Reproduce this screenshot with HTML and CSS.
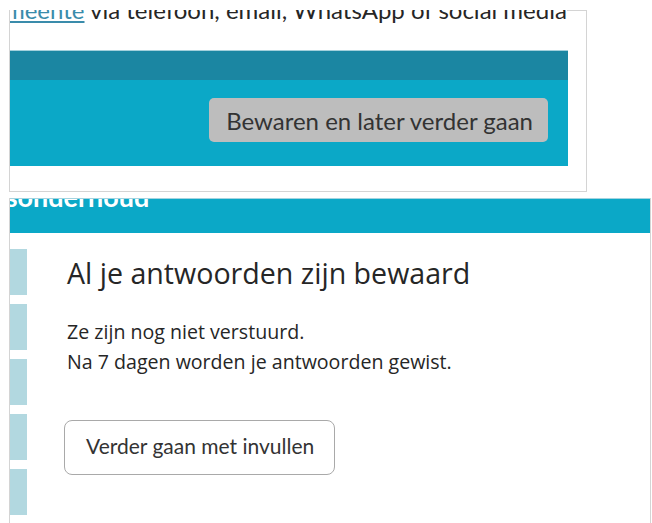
FILE: index.html
```html
<!DOCTYPE html>
<html lang="nl">
<head>
    <meta charset="UTF-8">
    <meta name="viewport" content="width=device-width, initial-scale=1.0">
    <title>Bewaren en later verder gaan</title>
    <link rel="stylesheet" href="styles.css">
</head>
<body>

<div class="save-panel">
    <div class="intro">
        <span class="intro-text"><a href="#">gemeente</a> via telefoon, email, WhatsApp of social media</span>
        <span class="intro-rule"></span>
    </div>
    <div class="save-bar">
        <div class="save-bar-top"></div>
        <div class="save-bar-body">
            <button class="btn-save">Bewaren en later verder gaan</button>
        </div>
    </div>
</div>

<div class="saved-panel">
    <div class="saved-head"><span class="saved-head-title">Huisonderhoud</span></div>
    <div class="saved-body">
        <div class="steps">
            <span></span><span></span><span></span><span></span><span></span><span></span><span></span>
        </div>
        <div class="saved-content">
            <h1>Al je antwoorden zijn bewaard</h1>
            <p>Ze zijn nog niet verstuurd.<br>Na 7 dagen worden je antwoorden gewist.</p>
            <button class="btn-continue">Verder gaan met invullen</button>
        </div>
    </div>
</div>

</body>
</html>
```

FILE: styles.css
```css
body {
    margin: 0;
    height: 523px;
    overflow: hidden;
    font-family: Lato, "Open Sans", sans-serif;
    color: #262626;
    background: #fff;
}
.save-panel {
    margin: 10px 0 0 9px;
    width: 576px;
    height: 181px;
    border: 1px solid #d4d4d4;
    border-top: none;
}
/* first line is cut off at the top, like in the screenshot */
.intro {
    display: flex;
    overflow: hidden;
    white-space: nowrap;
}
.intro-text {
    margin: -15px 0 0 -30px;
    font-size: 24px;
    line-height: 30px;
}
.intro a {
    color: #3a8cab;
}
.intro-rule {
    flex: 1;
    border-top: 1px solid #d4d4d4;
}
.save-bar {
    margin-top: 25px;
    width: 558px;
}
.save-bar-top {
    height: 29px;
    background: #1b86a2;
    border-top: 1px solid #a3d0dc;
}
.save-bar-body {
    height: 86px;
    box-sizing: border-box;
    padding: 18px 20px 0;
    display: flex;
    justify-content: flex-end;
    align-items: flex-start;
    background: #0ba8c7;
}
.btn-save {
    height: 44px;
    padding: 0 15px 0 17px;
    border: none;
    border-radius: 5px;
    background: #bdbdbd;
    color: #333;
    font-family: Lato, "Open Sans", sans-serif;
    font-size: 24px;
}
.saved-panel {
    margin: 6px 0 0 9px;
    width: 640px;
    height: 325px;
    overflow: hidden;
    border-left: 1px solid #d4d4d4;
    border-right: 1px solid #d4d4d4;
}
.saved-head {
    height: 34px;
    overflow: hidden;
    white-space: nowrap;
    background: #0ba8c7;
    border-top: 1px solid #a3d4e0;
}
.saved-head-title {
    display: block;
    margin: -16px 0 0 -47px;
    font-size: 27px;
    font-weight: bold;
    line-height: 28px;
    color: #fff;
}
.saved-body {
    display: flex;
}
.steps {
    width: 17px;
    flex-shrink: 0;
    padding-top: 16px;
    display: flex;
    flex-direction: column;
    gap: 9px;
}
.steps span {
    height: 46px;
    flex-shrink: 0;
    background: #b2d8e0;
}
.saved-content {
    padding: 23px 0 0 40px;
    font-family: "Open Sans", Lato, sans-serif;
}
.saved-content h1 {
    margin: 0;
    font-size: 28.6px;
    font-weight: normal;
    line-height: 34px;
}
.saved-content p {
    margin: 27px 0 0;
    font-size: 19.6px;
    line-height: 30px;
}
.btn-continue {
    margin: 43px 0 0 -3px;
    padding: 13px 20px 16px 21px;
    border: 1px solid #a9a9a9;
    border-radius: 8px;
    background: #fff;
    color: #333;
    font-family: Lato, "Open Sans", sans-serif;
    font-size: 21px;
    line-height: 24px;
}
```
